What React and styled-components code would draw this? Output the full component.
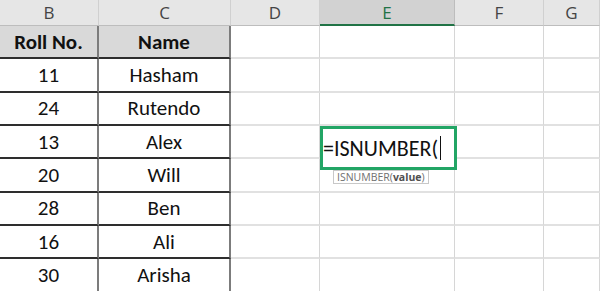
import React from "react";
import styled, { createGlobalStyle } from "styled-components";

const Global = createGlobalStyle`
  html, body { margin: 0; padding: 0; background: #fff; }
  body { width: 600px; height: 291px; overflow: hidden; }
`;

const FONT = `"Carlito", "Lato", "Liberation Sans", sans-serif`;

const Sheet = styled.div`
  position: relative;
  width: 600px;
  height: 291px;
  overflow: hidden;
  display: grid;
  grid-template-columns: 99px 132px 89px 135px 89px 56px;
  grid-template-rows: 26px repeat(8, 33.33px);
  font-family: ${FONT};
`;

const ColHeader = styled.div`
  display: flex;
  align-items: center;
  justify-content: center;
  box-sizing: border-box;
  background: ${(p) => (p.$active ? "#d2d2d2" : "#e6e6e6")};
  color: ${(p) => (p.$active ? "#217346" : "#444")};
  border-right: 1px solid ${(p) => (p.$active ? "#bdbdbd" : "#d0d0d0")};
  border-bottom: ${(p) => (p.$active ? "2px solid #217346" : "1px solid #bdbdbd")};
  font-family: "Open Sans", "Noto Sans", sans-serif;
  font-size: 17px;
  padding-top: ${(p) => (p.$active ? "1px" : "0")};
`;

const TableCell = styled.div`
  display: flex;
  align-items: center;
  justify-content: center;
  box-sizing: border-box;
  background: ${(p) => (p.$head ? "#d9d9d9" : "#fff")};
  border-right: 2px solid #7c7c7c;
  border-bottom: 2px solid #2e2e2e;
  font-size: 21px;
  font-weight: ${(p) => (p.$head ? 700 : 400)};
  color: #111;
`;

const EmptyCell = styled.div`
  box-sizing: border-box;
  border-right: 1px solid #d6d6d6;
  border-bottom: 2px solid #e1e1e1;
`;

const EditBox = styled.div`
  position: absolute;
  left: 320px;
  top: 126px;
  width: 137px;
  height: 44px;
  box-sizing: border-box;
  border: 3px solid #22a565;
  background: #fff;
  display: flex;
  align-items: center;
  font-family: ${FONT};
  font-size: 22px;
  color: #111;
  white-space: nowrap;
`;

const Caret = styled.span`
  display: inline-block;
  width: 1px;
  height: 24px;
  background: #111;
  margin-left: 2px;
`;

const Tip = styled.div`
  position: absolute;
  left: 333px;
  top: 170px;
  height: 14px;
  box-sizing: border-box;
  padding: 0 3px;
  border: 1px solid #c8c8c8;
  background: #fff;
  font-family: "Open Sans", "Noto Sans", sans-serif;
  font-size: 10.5px;
  line-height: 12px;
  color: #707070;
  white-space: nowrap;
`;

const Arg = styled.b`
  color: #505050;
  font-weight: 700;
`;

const cols = ["B", "C", "D", "E", "F", "G"];
const rows = [
  ["11", "Hasham"],
  ["24", "Rutendo"],
  ["13", "Alex"],
  ["20", "Will"],
  ["28", "Ben"],
  ["16", "Ali"],
  ["30", "Arisha"],
];

export default function App() {
  return (
    <>
      <Global />
      <Sheet>
        {cols.map((c) => (
          <ColHeader key={c} $active={c === "E"}>
            {c}
          </ColHeader>
        ))}
        <TableCell $head>Roll No.</TableCell>
        <TableCell $head>Name</TableCell>
        {[0, 1, 2, 3].map((i) => (
          <EmptyCell key={"h" + i} />
        ))}
        {rows.map(([n, name], r) => (
          <React.Fragment key={r}>
            <TableCell>{n}</TableCell>
            <TableCell>{name}</TableCell>
            {[0, 1, 2, 3].map((i) => (
              <EmptyCell key={i} />
            ))}
          </React.Fragment>
        ))}
        <EditBox>
          =ISNUMBER(
          <Caret />
        </EditBox>
        <Tip>
          ISNUMBER(<Arg>value</Arg>)
        </Tip>
      </Sheet>
    </>
  );
}
